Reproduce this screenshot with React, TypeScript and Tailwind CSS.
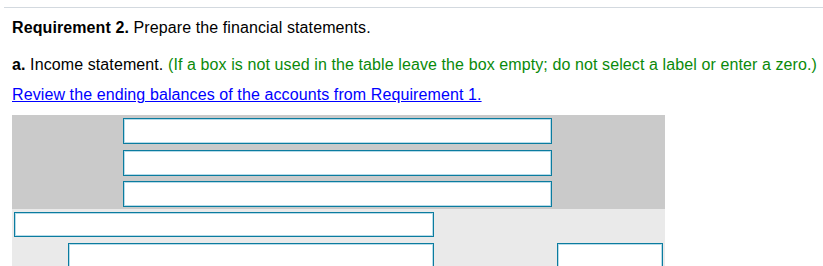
const font = { fontFamily: '"Liberation Sans", Arial, sans-serif' };

function Box({ className }: { className: string }) {
  return (
    <div
      className={`bg-white border border-[#0b7c9f] shadow-[inset_0_0_0_1px_#b7dbe9] ${className}`}
    />
  );
}

export default function App() {
  return (
    <div className="w-[823px] h-[266px] overflow-hidden bg-white text-black" style={font}>
      <div className="pt-[7px] pl-[4px]">
        <div className="h-px bg-[#d3d9df]" />
      </div>

      <div className="pl-[12px] text-[16px] tracking-[0.1px]">
        {/* headings */}
        <p className="mt-[11px] leading-[18px]">
          <span className="font-bold">Requirement 2.</span> Prepare the financial statements.
        </p>
        <p className="mt-[19px] leading-[18px] whitespace-nowrap">
          <span className="font-bold">a.</span> Income statement.{' '}
          <span className="text-[#0a8a0a]">
            (If a box is not used in the table leave the box empty; do not select a label or enter a zero.)
          </span>
        </p>
        <p className="mt-[12px] leading-[18px]">
          <a href="#" className="text-[#0000ff] underline">
            Review the ending balances of the accounts from Requirement 1.
          </a>
        </p>

        {/* statement table */}
        <div className="mt-[11px] w-[653px]">
          <div className="bg-[#cacaca]">
            <div className="h-[31px] pt-[3px] pl-[111px]">
              <Box className="w-[429px] h-[26px]" />
            </div>
            <div className="h-[32px] pt-[4px] pl-[111px]">
              <Box className="w-[429px] h-[26px]" />
            </div>
            <div className="h-[31px] pt-[3px] pl-[111px]">
              <Box className="w-[429px] h-[26px]" />
            </div>
          </div>
          <div className="bg-[#eaeaea]">
            <div className="h-[31px] pt-[3px] pl-[2px]">
              <Box className="w-[420px] h-[25px]" />
            </div>
            <div className="h-[31px] pt-[3px] flex">
              <Box className="ml-[56px] w-[366px] h-[26px]" />
              <Box className="ml-[123px] w-[106px] h-[26px]" />
            </div>
          </div>
        </div>
      </div>
    </div>
  );
}
